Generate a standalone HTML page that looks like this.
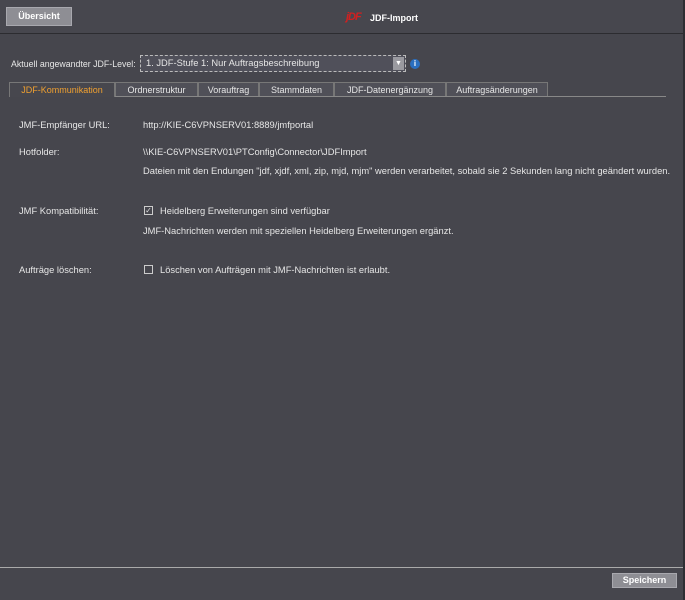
<!DOCTYPE html>
<html><head><meta charset="utf-8"><style>
body{margin:0;width:685px;height:600px;background:#46464d;font-family:"Liberation Sans",sans-serif;font-size:9.35px;color:#e6e6e6;position:relative;overflow:hidden}
.a{position:absolute;white-space:nowrap}
.btn{position:absolute;background:#8e8e94;border:1px solid #a8a8ae;color:#fff;font-weight:bold;font-size:9px;text-align:center;box-sizing:border-box}
.tab{position:absolute;top:82px;height:15px;border:1px solid #777;border-bottom:none;box-sizing:border-box;background:#505058;text-align:center;line-height:14px;color:#e6e6e6;font-size:9px}
.cb{position:absolute;width:9px;height:9px;border:1px solid #ccc;box-sizing:border-box}
</style></head><body>
<div class="a" style="left:0;top:0;width:685px;height:33px;background:#47474e;border-bottom:1px solid #2c2c30"></div>
<div class="a" style="left:683px;top:0;width:2px;height:600px;background:#2e2e33"></div>
<div class="btn" style="left:6px;top:7px;width:66px;height:19px;line-height:17px">Übersicht</div>
<div class="a" style="left:346px;top:11px;font-weight:bold;font-style:italic;color:#d02020;font-size:11px;letter-spacing:-1px">jDF</div>
<div class="a" style="left:370px;top:13px;font-weight:bold;color:#fff;font-size:9px">JDF-Import</div>
<div class="a" style="left:11px;top:59px;font-size:8.8px">Aktuell angewandter JDF-Level:</div>
<div class="a" style="left:140px;top:55px;width:266px;height:17px;border:1px dashed #bbb;box-sizing:border-box;background:#50505a;line-height:15px;padding-left:5px">1. JDF-Stufe 1: Nur Auftragsbeschreibung</div>
<div class="a" style="left:393px;top:57px;width:11px;height:13px;background:#9a9aa0;color:#fff;font-size:7px;text-align:center;line-height:13px">▼</div>
<div class="a" style="left:410px;top:59px;width:10px;height:10px;border-radius:50%;background:#2a6fc0;color:#fff;font-size:8px;font-weight:bold;text-align:center;line-height:10px">i</div>
<div class="tab" style="left:9px;width:106px;color:#f0a030;background:#47474e">JDF-Kommunikation</div>
<div class="tab" style="left:115px;width:83px">Ordnerstruktur</div>
<div class="tab" style="left:198px;width:61px">Vorauftrag</div>
<div class="tab" style="left:259px;width:75px">Stammdaten</div>
<div class="tab" style="left:334px;width:112px">JDF-Datenergänzung</div>
<div class="tab" style="left:446px;width:102px">Auftragsänderungen</div>
<div class="a" style="left:115px;top:96px;width:551px;height:1px;background:#888"></div>
<div class="a" style="left:19px;top:120px">JMF-Empfänger URL:</div>
<div class="a" style="left:143px;top:120px">http://KIE-C6VPNSERV01:8889/jmfportal</div>
<div class="a" style="left:19px;top:147px">Hotfolder:</div>
<div class="a" style="left:143px;top:147px">\\KIE-C6VPNSERV01\PTConfig\Connector\JDFImport</div>
<div class="a" style="left:143px;top:166px">Dateien mit den Endungen "jdf, xjdf, xml, zip, mjd, mjm" werden verarbeitet, sobald sie 2 Sekunden lang nicht geändert wurden.</div>
<div class="a" style="left:19px;top:206px">JMF Kompatibilität:</div>
<div class="cb" style="left:144px;top:206px;font-size:8px;line-height:7px;text-align:center;color:#ddd">✓</div>
<div class="a" style="left:160px;top:206px">Heidelberg Erweiterungen sind verfügbar</div>
<div class="a" style="left:143px;top:226px">JMF-Nachrichten werden mit speziellen Heidelberg Erweiterungen ergänzt.</div>
<div class="a" style="left:19px;top:265px">Aufträge löschen:</div>
<div class="cb" style="left:144px;top:265px"></div>
<div class="a" style="left:160px;top:265px">Löschen von Aufträgen mit JMF-Nachrichten ist erlaubt.</div>
<div class="a" style="left:0;top:567px;width:683px;height:1px;background:#aaa"></div>
<div class="btn" style="left:612px;top:573px;width:65px;height:15px;line-height:13px">Speichern</div>
</body></html>
